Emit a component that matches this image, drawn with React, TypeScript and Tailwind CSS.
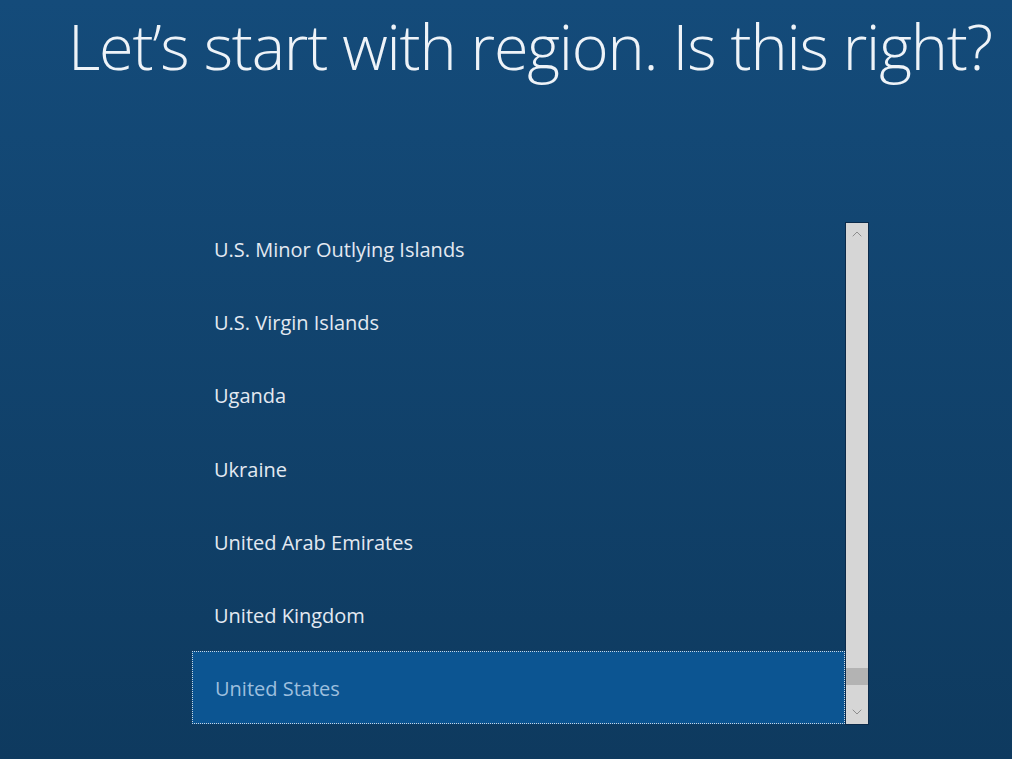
import { ChevronUp, ChevronDown } from "lucide-react";

// Windows OOBE "region" step: big light heading + a scrolled listbox with the selection at the bottom.

const REGIONS = [
  "U.S. Minor Outlying Islands",
  "U.S. Virgin Islands",
  "Uganda",
  "Ukraine",
  "United Arab Emirates",
  "United Kingdom",
  "United States",
];

const SELECTED = "United States";

function Row({ name }: { name: string }) {
  const sel = name === SELECTED;
  return (
    <div
      className={`flex h-[73.3px] items-center px-[22px] pt-[4px] text-[20px] ${
        sel ? "border border-dotted border-[#c9d6e3] bg-[#0c5592] text-[#9dbfde]" : "text-[#e3e9f1]"
      }`}
    >
      {name}
    </div>
  );
}

function Scrollbar() {
  return (
    <div className="flex w-[24px] flex-col border border-[#0b2a4a] bg-[#d6d6d6]">
      <div className="flex h-[20px] items-center justify-center pt-[2px] text-[#888888]">
        <ChevronUp size={16} strokeWidth={1.4} />
      </div>
      <div className="flex-1" />
      <div className="h-[17px] bg-[#b3b3b3]" />
      <div className="flex h-[39px] items-end justify-center pb-[4px] text-[#888888]">
        <ChevronDown size={16} strokeWidth={1.4} />
      </div>
    </div>
  );
}

export default function App() {
  return (
    <div
      className="h-[759px] w-[1012px] overflow-hidden bg-gradient-to-b from-[#144b7a] to-[#0e3a5f]"
      style={{ fontFamily: '"Open Sans", "Noto Sans", sans-serif' }}
    >
      <h1 className="whitespace-nowrap pl-[68px] pt-[8px] text-[63px] font-light leading-[76px] tracking-[-1.2px] text-[#eef3f8]">
        Let’s start with region. Is this right?
      </h1>

      <div className="ml-[192px] mt-[138px] flex h-[503px] w-[677px]">
        <div className="flex-1 overflow-hidden">
          <div className="-mt-[11px]">
            {REGIONS.map((r) => (
              <Row key={r} name={r} />
            ))}
          </div>
        </div>
        <Scrollbar />
      </div>
    </div>
  );
}
